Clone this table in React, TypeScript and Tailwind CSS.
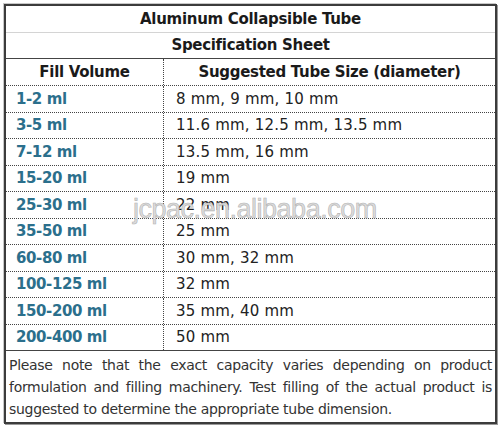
const rows: [string, string][] = [
  ["1-2 ml", "8 mm, 9 mm, 10 mm"],
  ["3-5 ml", "11.6 mm, 12.5 mm, 13.5 mm"],
  ["7-12 ml", "13.5 mm, 16 mm"],
  ["15-20 ml", "19 mm"],
  ["25-30 ml", "22 mm"],
  ["35-50 ml", "25 mm"],
  ["60-80 ml", "30 mm, 32 mm"],
  ["100-125 ml", "32 mm"],
  ["150-200 ml", "35 mm, 40 mm"],
  ["200-400 ml", "50 mm"],
];

export default function App() {
  return (
    <div className="relative w-[500px] h-[429px] bg-white pt-[4px] pl-[4px] font-['DejaVu_Sans',sans-serif]">
      <div className="w-[493px] border-[2px] border-[#3c3c3c] shadow-[1px_1px_0_#9a9a9a,-1px_-1px_0_#c8c8c8]">
        <div className="h-[27px] flex items-center justify-center border-b border-[#d4d4d4] text-[15px] font-bold text-[#1a1a1a] tracking-[-0.3px]">
          Aluminum Collapsible Tube
        </div>
        <div className="h-[26px] flex items-center justify-center border-b border-[#444] text-[15px] font-bold text-[#1a1a1a] tracking-[-0.3px]">
          Specification Sheet
        </div>
        <div className="h-[27px] flex border-b border-dotted border-[#444] text-[15px] font-bold text-[#1a1a1a] tracking-[-0.3px]">
          <div className="w-[158px] flex items-center justify-center border-r border-dotted border-[#444]">Fill Volume</div>
          <div className="flex-1 flex items-center justify-center">Suggested Tube Size (diameter)</div>
        </div>
        {rows.map(([vol, size], i) => (
          <div
            key={vol}
            className={`h-[26.5px] flex text-[15px] ${i === rows.length - 1 ? "border-b border-[#444]" : "border-b border-dotted border-[#444]"}`}
          >
            <div className="w-[158px] flex items-center pl-[10px] border-r border-dotted border-[#444] font-bold text-[#2b6f8c] tracking-[-0.4px]">{vol}</div>
            <div className="flex-1 flex items-center pl-[12px] text-[#222] tracking-[0.2px]">{size}</div>
          </div>
        ))}
        <p className="px-[3px] pt-[3px] pb-[2px] text-[14px] leading-[22px] text-[#333] text-justify tracking-[-0.3px]">
          Please note that the exact capacity varies depending on product formulation and filling machinery. Test filling of the actual product is suggested to determine the appropriate tube dimension.
        </p>
      </div>
      <div className="absolute left-[133px] top-[196px] text-[27px] leading-none font-['Liberation_Sans',sans-serif] text-[#dcdcdc] [-webkit-text-stroke:0.6px_#b4b4b4] tracking-[-0.5px]">
        jcpac.en.alibaba.com
      </div>
    </div>
  );
}
